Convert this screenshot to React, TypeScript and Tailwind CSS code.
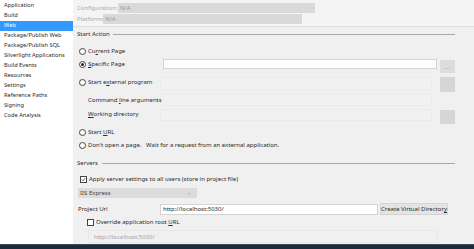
import React from 'react';

// Project properties — "Web" tab of a Visual Studio project designer, shrunk down.
const NAV = [
  'Application',
  'Build',
  'Web',
  'Package/Publish Web',
  'Package/Publish SQL',
  'Silverlight Applications',
  'Build Events',
  'Resources',
  'Settings',
  'Reference Paths',
  'Signing',
  'Code Analysis',
];

function Radio({ checked = false }: { checked?: boolean }) {
  return (
    <span className="flex h-[7px] w-[7px] shrink-0 items-center justify-center rounded-full border border-[#444] bg-white">
      {checked && <span className="h-[3px] w-[3px] rounded-full bg-[#222]" />}
    </span>
  );
}

function Check({ checked = false }: { checked?: boolean }) {
  return (
    <span className="flex h-[7px] w-[7px] shrink-0 items-center justify-center border border-[#444] bg-white">
      {checked && (
        <svg width="5" height="5" viewBox="0 0 10 10" fill="none">
          <path d="M1.5 5.2 4 7.8 8.6 2" stroke="#333" strokeWidth="1.4" />
        </svg>
      )}
    </span>
  );
}

function Heading({ label, lineFrom }: { label: string; lineFrom: string }) {
  return (
    <div className="flex h-[10px] items-center pl-[4px] pr-[19px]">
      <span className={lineFrom}>{label}</span>
      <span className="h-px flex-1 bg-[#a8a8a8]" />
    </div>
  );
}

export default function App() {
  return (
    <div
      className="flex h-[249px] w-[474px] flex-col overflow-hidden whitespace-nowrap bg-[#f0f0f0] text-[6px] leading-none text-[#2b2b2b]"
      style={{ fontFamily: '"Segoe UI", "Noto Sans", sans-serif' }}
    >
      <div className="flex flex-1">
        {/* left tab list */}
        <div className="flex w-[73px] flex-col bg-white pt-[1px] text-[5.7px]">
          {NAV.map((item) => (
            <div
              key={item}
              className={
                item === 'Web'
                  ? 'flex h-[10px] items-center bg-[#3399ff] pl-[4px] text-white'
                  : 'flex h-[10px] items-center pl-[4px]'
              }
            >
              {item}
            </div>
          ))}
        </div>

        {/* property page */}
        <div className="flex flex-1 flex-col">
          <div className="flex h-[27px] flex-col gap-[1px] border-b border-[#dedede] bg-[#f4f4f4] pl-[4px] pt-[3px] text-[#ababab]">
            <div className="flex h-[10px] items-center">
              <span className="w-[41px]">Configuration:</span>
              <span className="flex h-full w-[197px] items-center bg-[#d9d9d9] pl-[2px] text-[#9a9a9a]">N/A</span>
            </div>
            <div className="flex h-[10px] items-center">
              <span className="w-[26px]">Platforms:</span>
              <span className="flex h-full w-[199px] items-center bg-[#d9d9d9] pl-[2px] text-[#9a9a9a]">N/A</span>
            </div>
          </div>

          <div className="mt-[2px]">
            <Heading label="Start Action" lineFrom="w-[36px]" />
          </div>

          <div className="mt-[7px] flex h-[10px] items-center gap-[2px] pl-[6px]">
            <Radio />
            <span>
              Cu<u>r</u>rent Page
            </span>
          </div>

          <div className="mt-[3px] flex h-[10px] items-start pl-[6px]">
            <div className="flex h-full w-[84px] items-center gap-[2px]">
              <Radio checked />
              <span>
                <u>S</u>pecific Page
              </span>
            </div>
            <span className="h-[10px] w-[274px] border border-[#d4d4d4] bg-white" />
            <span className="ml-[3px] mt-[1px] flex h-[13px] w-[15px] items-center justify-center bg-[#dcdcdc] text-[#999]">
              ...
            </span>
          </div>

          <div className="mt-[8px] flex h-[10px] items-start pl-[6px]">
            <div className="flex h-full w-[81px] items-center gap-[2px]">
              <Radio />
              <span>
                Start e<u>x</u>ternal program
              </span>
            </div>
            <span className="h-[13px] w-[272px] border border-[#ebebeb] bg-[#f1f1f1]" />
            <span className="ml-[8px] h-[15px] w-[15px] bg-[#d6d6d6]" />
          </div>

          <div className="mt-[8px] flex h-[10px] items-center pl-[15px]">
            <span className="relative z-10 w-[72px]">
              Command <u>l</u>ine arguments
            </span>
            <span className="h-[12px] w-[272px] border border-[#ebebeb] bg-[#f1f1f1]" />
          </div>

          <div className="mt-[4px] flex h-[10px] items-start pl-[15px]">
            <span className="flex h-full w-[72px] items-center">
              <u>W</u>orking directory
            </span>
            <span className="h-[12px] w-[272px] border border-[#ebebeb] bg-[#f1f1f1]" />
            <span className="ml-[8px] mt-[1px] h-[14px] w-[15px] bg-[#d6d6d6]" />
          </div>

          <div className="mt-[8px] flex h-[10px] items-center gap-[2px] pl-[6px]">
            <Radio />
            <span>
              Start <u>U</u>RL
            </span>
          </div>

          <div className="mt-[3px] flex h-[10px] items-center gap-[2px] pl-[6px]">
            <Radio />
            <span>Don't open a page.&nbsp;&nbsp; Wait for a request from an external application.</span>
          </div>

          <div className="mt-[8px]">
            <Heading label="Servers" lineFrom="w-[25px]" />
          </div>

          <div className="mt-[6px] flex h-[10px] items-center gap-[2px] pl-[7px]">
            <Check checked />
            <span>Apply server settings to all users (store in project file)</span>
          </div>

          <div className="ml-[5px] mt-[4px] flex h-[10px] w-[119px] items-center justify-between bg-[#dcdcdc] pl-[2px] pr-[6px] text-[#444]">
            <span>IIS Express</span>
            <svg width="4" height="3" viewBox="0 0 8 5" fill="none">
              <path d="M1 1l3 3 3-3" stroke="#a0a0a0" strokeWidth="1.2" />
            </svg>
          </div>

          <div className="mt-[5px] flex h-[12px] items-center pl-[5px]">
            <span className="w-[82px]">Project Url</span>
            <span className="flex h-[11px] w-[218px] items-center border border-[#d4d4d4] bg-white pl-[2px]">
              http://localhost:5030/
            </span>
            <span className="ml-[2px] flex h-[12px] w-[68px] items-center justify-center border border-[#d4d4d4] bg-[#e4e4e4]">
              Create Virtual Director<u>y</u>
            </span>
          </div>

          <div className="mt-[2px] flex h-[10px] items-center gap-[2px] pl-[14px]">
            <Check />
            <span>
              Override application root <u>U</u>RL
            </span>
          </div>

          <div className="ml-[15px] mt-[3px] flex h-[13px] w-[350px] items-center border border-[#e8e8e8] pl-[5px] text-[#a4a4a4]">
            http://localhost:5030/
          </div>
        </div>
      </div>

      {/* status strip */}
      <div className="h-[5px] border-t border-[#3a4a5c] bg-[#1c2a3a]" />
    </div>
  );
}
